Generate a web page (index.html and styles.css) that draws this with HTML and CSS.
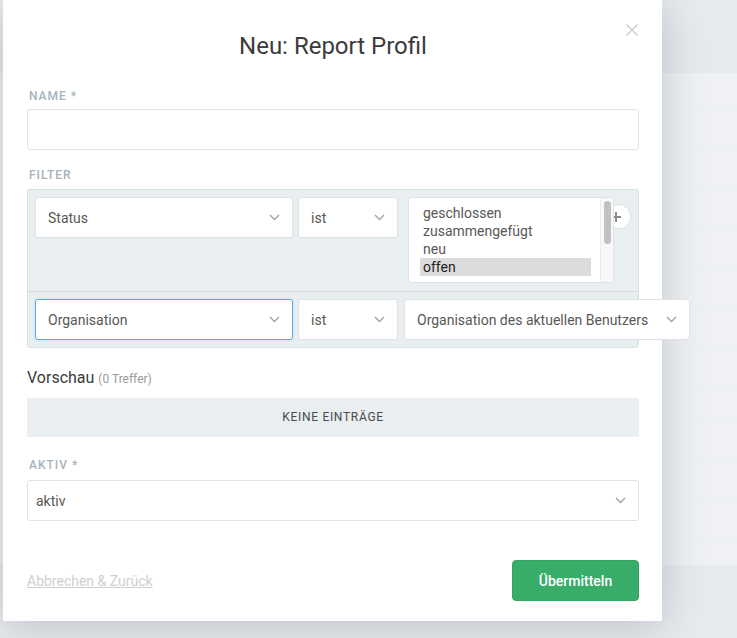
FILE: index.html
```html
<!DOCTYPE html>
<html lang="de">
<head>
    <meta charset="UTF-8">
    <meta name="viewport" content="width=device-width, initial-scale=1.0">
    <title>Neu: Report Profil</title>
    <link rel="stylesheet" href="styles.css">
</head>
<body>

<!-- Liste im Hintergrund, vom Dialog überdeckt -->
<div class="page">
    <div class="list">
        <div class="list-head"></div>
        <div class="list-row"></div>
        <div class="list-row"></div>
        <div class="list-row"></div>
        <div class="list-row"></div>
        <div class="list-row"></div>
        <div class="list-row"></div>
        <div class="list-row"></div>
        <div class="list-row"></div>
        <div class="list-row"></div>
        <div class="list-row"></div>
        <div class="list-row"></div>
        <div class="list-row"></div>
    </div>
</div>

<div class="modal">
    <button class="modal-close" type="button" aria-label="Schließen">
        <svg width="12" height="12" viewBox="0 0 12 12"><path d="M0.5 0.5L11.5 11.5M11.5 0.5L0.5 11.5" stroke="#c9c9c9" stroke-width="1.3" fill="none"/></svg>
    </button>

    <h1 class="modal-title">Neu: Report Profil</h1>

    <form class="modal-body">
        <label class="field-label first">Name *</label>
        <input class="field" type="text">

        <label class="field-label">Filter</label>
        <div class="filter">
            <div class="filter-row">
                <div class="select w-attr">
                    <span>Status</span>
                    <svg class="chevron" width="11" height="7" viewBox="0 0 11 7"><path d="M1 1l4.5 4.5L10 1" fill="none" stroke="#a3a3a3" stroke-width="1.4"/></svg>
                </div>
                <div class="select w-op">
                    <span>ist</span>
                    <svg class="chevron" width="11" height="7" viewBox="0 0 11 7"><path d="M1 1l4.5 4.5L10 1" fill="none" stroke="#a3a3a3" stroke-width="1.4"/></svg>
                </div>
                <div class="listbox">
                    <ul>
                        <li>geschlossen</li>
                        <li>zusammengefügt</li>
                        <li>neu</li>
                        <li class="selected">offen</li>
                    </ul>
                    <div class="scrollbar"><span class="thumb"></span></div>
                </div>
                <span class="filter-add">
                    <svg width="10" height="10" viewBox="0 0 10 10"><path d="M5 0v10M0 5h10" stroke="#8a8a8a" stroke-width="2"/></svg>
                </span>
            </div>
            <div class="filter-row">
                <div class="select w-attr is-focused">
                    <span>Organisation</span>
                    <svg class="chevron" width="11" height="7" viewBox="0 0 11 7"><path d="M1 1l4.5 4.5L10 1" fill="none" stroke="#a3a3a3" stroke-width="1.4"/></svg>
                </div>
                <div class="select w-op">
                    <span>ist</span>
                    <svg class="chevron" width="11" height="7" viewBox="0 0 11 7"><path d="M1 1l4.5 4.5L10 1" fill="none" stroke="#a3a3a3" stroke-width="1.4"/></svg>
                </div>
                <div class="select w-value">
                    <span>Organisation des aktuellen Benutzers</span>
                    <svg class="chevron" width="11" height="7" viewBox="0 0 11 7"><path d="M1 1l4.5 4.5L10 1" fill="none" stroke="#a3a3a3" stroke-width="1.4"/></svg>
                </div>
            </div>
        </div>

        <h2 class="preview-title">Vorschau <small>(0 Treffer)</small></h2>
        <div class="preview-empty">Keine Einträge</div>

        <label class="field-label spaced">Aktiv *</label>
        <div class="select w-full">
            <span>aktiv</span>
            <svg class="chevron" width="11" height="7" viewBox="0 0 11 7"><path d="M1 1l4.5 4.5L10 1" fill="none" stroke="#a3a3a3" stroke-width="1.4"/></svg>
        </div>

        <div class="modal-footer">
            <a href="#" class="cancel">Abbrechen &amp; Zurück</a>
            <button type="submit" class="btn-submit">Übermitteln</button>
        </div>
    </form>
</div>

</body>
</html>
```

FILE: styles.css
```css
* {
    margin: 0;
    padding: 0;
    box-sizing: border-box;
}

body {
    font-family: Roboto, "Noto Sans", sans-serif;
    font-size: 14px;
    color: #585856;
    background-color: #e8ebee;
    height: 638px;
    overflow: hidden;
    position: relative;
}

/* Hintergrundliste */
.page {
    padding-top: 34px;
}

.list {
    height: 531px;
    background-color: #eff1f4;
}

.list-head {
    height: 39px;
    background-color: #e7eaed;
}

.list-row {
    height: 39px;
    border-bottom: 1px solid #ebeef1;
}

/* Dialog */
.modal {
    position: absolute;
    left: 3px;
    top: 0;
    width: 659px;
    background-color: #fff;
    box-shadow: 0 5px 40px rgba(40, 55, 70, 0.24);
    padding: 30px 23px 20px 24px;
}

.modal-close {
    position: absolute;
    top: 24px;
    right: 24px;
    width: 12px;
    height: 12px;
    border: none;
    background: none;
    display: flex;
}

.modal-title {
    font-size: 24px;
    line-height: 32px;
    font-weight: normal;
    text-align: center;
    color: #3a3b3c;
}

.field-label {
    display: block;
    margin-top: 17px;
    margin-bottom: 6px;
    padding-left: 2px;
    font-size: 12px;
    line-height: 16px;
    letter-spacing: 1px;
    text-transform: uppercase;
    font-weight: 500;
    color: #a6b3ba;
}

.field-label.first {
    margin-top: 26px;
    margin-bottom: 5px;
}

.field-label.spaced {
    margin-top: 20px;
    margin-bottom: 7px;
}

.field {
    display: block;
    width: 100%;
    height: 41px;
    border: 1px solid #dfe3e5;
    border-radius: 3px;
    background-color: #fff;
}

/* Auswahlfelder */
.select {
    height: 41px;
    flex-shrink: 0;
    display: flex;
    align-items: center;
    justify-content: space-between;
    padding: 0 12px 0 12px;
    border: 1px solid #dfe3e5;
    border-radius: 3px;
    background-color: #fff;
    white-space: nowrap;
}

.select.is-focused {
    border-color: #5fa8dc;
    box-shadow: 0 0 0 2px #dcebf6;
}

.w-attr {
    width: 258px;
}

.w-op {
    width: 100px;
    margin-left: 5px;
}

.w-value {
    width: 286px;
    margin-left: 6px;
}

.w-full {
    width: 100%;
    padding-left: 8px;
}

/* Filterbereich */
.filter {
    border: 1px solid #d9e0e4;
    border-radius: 3px;
    background-color: #e9eef1;
}

.filter-row {
    display: flex;
    align-items: flex-start;
    padding: 7px;
}

.filter-row:first-child {
    padding-bottom: 8px;
}

.filter-row + .filter-row {
    border-top: 1px solid #d6dde1;
}

.listbox {
    position: relative;
    z-index: 1;
    width: 206px;
    height: 86px;
    margin-left: 10px;
    display: flex;
    border: 1px solid #dfe3e5;
    border-radius: 3px;
    background-color: #fff;
    overflow: hidden;
}

.listbox ul {
    flex: 1;
    list-style: none;
    padding: 6px 9px 0 11px;
}

.listbox li {
    line-height: 18px;
    padding-left: 3px;
}

.listbox li.selected {
    background-color: #dcdcdc;
    color: #222;
}

.scrollbar {
    width: 13px;
    padding: 3px 2px 0 3px;
    background-color: #f8f8f8;
    border-left: 1px solid #ececec;
}

.thumb {
    display: block;
    height: 43px;
    border-radius: 4px;
    background-color: #c1c1c1;
}

.filter-add {
    width: 24px;
    height: 25px;
    margin-top: 7px;
    margin-left: -7px;
    padding-left: 3px;
    display: flex;
    align-items: center;
    border: 1px solid #dde3e6;
    border-radius: 50%;
    background-color: #fff;
}

/* Vorschau */
.preview-title {
    margin-top: 20px;
    font-size: 16px;
    line-height: 20px;
    font-weight: normal;
    color: #3a3b3c;
}

.preview-title small {
    font-size: 12px;
    color: #9a9a9a;
}

.preview-empty {
    margin-top: 9px;
    height: 39px;
    line-height: 39px;
    text-align: center;
    font-size: 12px;
    letter-spacing: 0.7px;
    text-transform: uppercase;
    color: #4a4a4a;
    background-color: #e9eef1;
}

/* Fußzeile */
.modal-footer {
    margin-top: 39px;
    display: flex;
    justify-content: space-between;
    align-items: center;
}

.cancel {
    font-size: 14px;
    color: #cfcfcf;
    text-decoration: underline;
}

.btn-submit {
    width: 127px;
    height: 41px;
    border: 1px solid #33a362;
    border-radius: 4px;
    background-color: #38ad69;
    color: #fff;
    font-family: Roboto, "Noto Sans", sans-serif;
    font-size: 14px;
    font-weight: 500;
}
```
